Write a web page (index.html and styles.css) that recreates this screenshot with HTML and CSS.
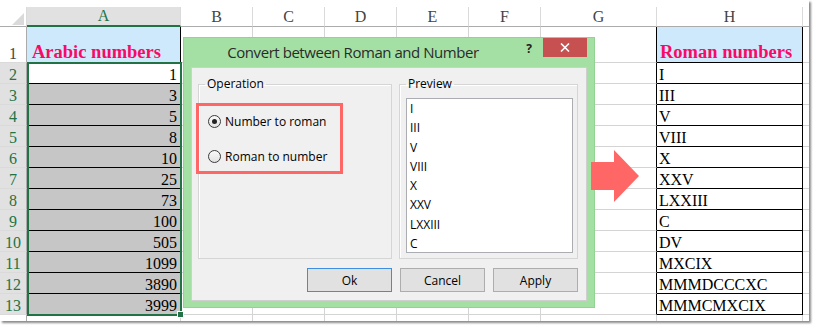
FILE: index.html
```html
<!DOCTYPE html>
<html>
<head>
<meta charset="utf-8">
<link rel="stylesheet" href="styles.css">
</head>
<body>
<div class="shot">
  <div class="sheet">
    <div class="grid">
      <div class="corner"></div>
      <div class="ch on">A</div><div class="ch">B</div><div class="ch">C</div><div class="ch">D</div><div class="ch">E</div><div class="ch">F</div><div class="ch">G</div><div class="ch">H</div><div class="ch"></div>

      <div class="rh">1</div><div class="c a1 hd">Arabic numbers</div><div class="c"></div><div class="c"></div><div class="c"></div><div class="c"></div><div class="c"></div><div class="c gb"></div><div class="c h hd">Roman numbers</div><div class="c"></div>

      <div class="rh on">2</div><div class="c a act">1</div><div class="c"></div><div class="c"></div><div class="c"></div><div class="c"></div><div class="c"></div><div class="c gb"></div><div class="c h">I</div><div class="c"></div>
      <div class="rh on">3</div><div class="c a">3</div><div class="c"></div><div class="c"></div><div class="c"></div><div class="c"></div><div class="c"></div><div class="c gb"></div><div class="c h">III</div><div class="c"></div>
      <div class="rh on">4</div><div class="c a">5</div><div class="c"></div><div class="c"></div><div class="c"></div><div class="c"></div><div class="c"></div><div class="c gb"></div><div class="c h">V</div><div class="c"></div>
      <div class="rh on">5</div><div class="c a">8</div><div class="c"></div><div class="c"></div><div class="c"></div><div class="c"></div><div class="c"></div><div class="c gb"></div><div class="c h">VIII</div><div class="c"></div>
      <div class="rh on">6</div><div class="c a">10</div><div class="c"></div><div class="c"></div><div class="c"></div><div class="c"></div><div class="c"></div><div class="c gb"></div><div class="c h">X</div><div class="c"></div>
      <div class="rh on">7</div><div class="c a">25</div><div class="c"></div><div class="c"></div><div class="c"></div><div class="c"></div><div class="c"></div><div class="c gb"></div><div class="c h">XXV</div><div class="c"></div>
      <div class="rh on">8</div><div class="c a">73</div><div class="c"></div><div class="c"></div><div class="c"></div><div class="c"></div><div class="c"></div><div class="c gb"></div><div class="c h">LXXIII</div><div class="c"></div>
      <div class="rh on">9</div><div class="c a">100</div><div class="c"></div><div class="c"></div><div class="c"></div><div class="c"></div><div class="c"></div><div class="c gb"></div><div class="c h">C</div><div class="c"></div>
      <div class="rh on">10</div><div class="c a">505</div><div class="c"></div><div class="c"></div><div class="c"></div><div class="c"></div><div class="c"></div><div class="c gb"></div><div class="c h">DV</div><div class="c"></div>
      <div class="rh on">11</div><div class="c a">1099</div><div class="c"></div><div class="c"></div><div class="c"></div><div class="c"></div><div class="c"></div><div class="c gb"></div><div class="c h">MXCIX</div><div class="c"></div>
      <div class="rh on">12</div><div class="c a">3890</div><div class="c"></div><div class="c"></div><div class="c"></div><div class="c"></div><div class="c"></div><div class="c gb"></div><div class="c h">MMMDCCCXC</div><div class="c"></div>
      <div class="rh on">13</div><div class="c a">3999</div><div class="c"></div><div class="c"></div><div class="c"></div><div class="c"></div><div class="c"></div><div class="c gb"></div><div class="c h">MMMCMXCIX</div><div class="c"></div>
      <div class="rh">14</div><div class="c"></div><div class="c"></div><div class="c"></div><div class="c"></div><div class="c"></div><div class="c"></div><div class="c"></div><div class="c"></div><div class="c"></div>

      <div class="sel"><span class="handle"></span></div>
    </div>

    <div class="dialog">
      <div class="titlebar">
        <div class="title">Convert between Roman and Number</div>
        <div class="help">?</div>
        <div class="close">
          <svg width="10" height="9" viewBox="0 0 10 9"><path d="M1 0.5 L9 8.5 M9 0.5 L1 8.5" stroke="#fff" stroke-width="1.6" fill="none"/></svg>
        </div>
      </div>
      <div class="body">
        <div class="groups">
          <fieldset class="group">
            <legend>Operation</legend>
            <div class="choices">
              <div class="choice"><span class="radio on"></span>Number to roman</div>
              <div class="choice"><span class="radio"></span>Roman to number</div>
            </div>
          </fieldset>
          <fieldset class="group">
            <legend>Preview</legend>
            <ul class="list">
              <li>I</li><li>III</li><li>V</li><li>VIII</li><li>X</li><li>XXV</li><li>LXXIII</li><li>C</li>
            </ul>
          </fieldset>
        </div>
        <div class="buttons">
          <button class="btn def">Ok</button>
          <button class="btn">Cancel</button>
          <button class="btn">Apply</button>
        </div>
      </div>
    </div>

    <svg class="arrow" width="48" height="52" viewBox="0 0 48 52"><polygon points="0,12 23,12 23,0 48,26 23,52 23,40 0,40" fill="#ff6666"/></svg>
  </div>
</div>
</body>
</html>
```

FILE: styles.css
```css
* { box-sizing: border-box; }
body { margin: 0; background: #fff; }

.shot {
  width: 813px;
  height: 326px;
  position: relative;
  overflow: hidden;
  background: #fff;
}

.sheet {
  position: relative;
  width: 809px;
  height: 321px;
  overflow: hidden;
  background: #fff;
  padding-top: 7px;
  box-shadow: 2px 2px 2px #8c8c8c;
}

.grid {
  position: relative;
  display: grid;
  grid-template-columns: 27px 154px 72px 72px 72px 72px 72px 116px 146px 60px;
  grid-template-rows: 20px 36px repeat(13, 21px);
  font-family: "Liberation Serif", "Times New Roman", serif;
  font-size: 16px;
  color: #000;
}

.corner {
  border-right: 1px solid #dadada;
  border-bottom: 1px solid #ababab;
  position: relative;
}
.corner::after {
  content: "";
  position: absolute;
  left: 12px;
  top: 6px;
  width: 12px;
  height: 12px;
  background: #dadada;
  clip-path: polygon(100% 0, 100% 100%, 0 100%);
}

.ch {
  border-right: 1px solid #dadada;
  border-bottom: 1px solid #ababab;
  display: flex;
  align-items: center;
  justify-content: center;
  color: #444;
  background: #fff;
}
.ch.on {
  background: #e1e1e1;
  color: #217346;
  border-bottom: 2px solid #217346;
}

.rh {
  border-right: 1px solid #ababab;
  border-bottom: 1px solid #dadada;
  display: flex;
  align-items: flex-end;
  justify-content: center;
  line-height: 16px;
  color: #444;
  background: #fff;
}
.rh.on {
  background: #e1e1e1;
  color: #217346;
}

.c {
  border-right: 1px solid #d4d4d4;
  border-bottom: 1px solid #d4d4d4;
  display: flex;
  align-items: flex-end;
  line-height: 16px;
  white-space: nowrap;
  overflow: hidden;
}
.c.a {
  justify-content: flex-end;
  padding-right: 3px;
  background: #c6c6c6;
  border-bottom-color: #000;
}
.c.a.act { background: #fff; }
.c.gb { border-right-color: #000; }
.c.h {
  border-right-color: #000;
  border-bottom-color: #000;
  padding-left: 2px;
}
.c.a1 {
  border-right-color: #000;
  padding-left: 5px;
}
.c.hd {
  background: #cde9fb;
  color: #f80a66;
  font-weight: bold;
  font-size: 18.5px;
  line-height: 20px;
}
.c.h.hd { padding-left: 3px; }

.sel {
  position: absolute;
  grid-column: 2 / 3;
  grid-row: 3 / 15;
  top: -1px;
  right: -1px;
  bottom: -1px;
  left: 0;
  border: 2px solid #217346;
  z-index: 1;
}
.handle {
  position: absolute;
  right: -4px;
  bottom: -4px;
  width: 7px;
  height: 7px;
  background: #217346;
  border: 1px solid #fff;
}

/* Dialog */
.dialog {
  position: absolute;
  left: 183px;
  top: 37px;
  width: 412px;
  height: 271px;
  z-index: 5;
  background: #a4e0a4;
  border: 1px solid #92d292;
  padding: 0 7px 6px 7px;
  display: flex;
  flex-direction: column;
  font-family: "Open Sans", "Noto Sans", sans-serif;
  font-size: 12px;
  color: #000;
}

.titlebar {
  height: 29px;
  display: flex;
  align-items: flex-start;
}
.title {
  flex: 1;
  text-align: center;
  font-size: 15px;
  letter-spacing: -0.45px;
  line-height: 28px;
  color: #2b2b2b;
  padding-right: 4px;
}
.help {
  width: 20px;
  margin-right: 4px;
  text-align: center;
  font-weight: bold;
  font-size: 12px;
  line-height: 20px;
  padding-top: 1px;
  color: #222;
}
.close {
  width: 44px;
  height: 19px;
  background: #c75050;
  display: flex;
  align-items: center;
  justify-content: center;
}

.body {
  flex: 1;
  background: #f0f0f0;
  border: 1px solid #cfcfcf;
  padding: 8px 8px 8px 6px;
  display: flex;
  flex-direction: column;
}

.groups {
  display: grid;
  grid-template-columns: 194px 179px;
  gap: 7px;
  height: 183px;
}

.group {
  margin: 0;
  padding: 0;
  min-width: 0;
  border: 1px solid #d5d5d5;
  box-shadow: inset 1px 1px 0 #fff;
  height: 183px;
}
.group legend {
  margin-left: 6px;
  padding: 0 2px;
  line-height: 16px;
  font-size: 12px;
  color: #000;
}

.choices {
  margin: 11px 0 0 -3px;
  width: 147px;
  height: 71px;
  border: 3px solid #ff6666;
  padding: 6px 0 0 9px;
  display: flex;
  flex-direction: column;
  gap: 17px;
}
.choice {
  height: 18px;
  display: flex;
  align-items: center;
  white-space: nowrap;
}
.radio {
  width: 13px;
  height: 13px;
  border-radius: 50%;
  border: 1px solid #3a3a3a;
  background: linear-gradient(#fafafa, #e2e2e2);
  margin-right: 4px;
  display: flex;
  align-items: center;
  justify-content: center;
}
.radio.on::after {
  content: "";
  width: 5px;
  height: 5px;
  border-radius: 50%;
  background: #222;
}

.list {
  list-style: none;
  margin: 6px 4px 5px 6px;
  padding: 0 3px;
  height: 155px;
  background: #fff;
  border: 1px solid #abadb3;
  line-height: 19.3px;
}

.buttons {
  margin-top: 9px;
  display: flex;
  justify-content: flex-end;
  gap: 8px;
}
.btn {
  width: 85px;
  height: 24px;
  font-family: "Open Sans", "Noto Sans", sans-serif;
  font-size: 12px;
  color: #000;
  background: #e1e1e1;
  border: 1px solid #adadad;
  padding: 0;
}
.btn.def { border-color: #3d8ee0; }

.arrow {
  position: absolute;
  left: 591px;
  top: 150px;
  z-index: 6;
}
```
